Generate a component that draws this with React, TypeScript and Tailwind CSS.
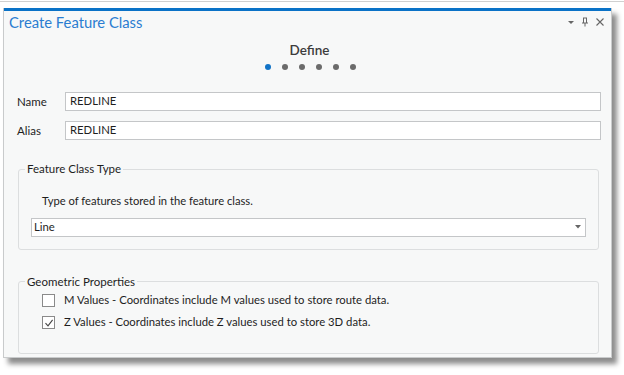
import { useState } from "react";

const font = { fontFamily: 'Lato, "Noto Sans", sans-serif' };

function GroupBox({ title, children, className }: { title: string; children: React.ReactNode; className?: string }) {
  return (
    <fieldset className={`rounded-[3px] border border-[#dcdedf] px-[12px] ${className ?? ""}`}>
      <legend className="-ml-[6px] px-[2px] text-[11.5px] leading-[14px] text-[#1e1e1e]">{title}</legend>
      {children}
    </fieldset>
  );
}

function CheckRow({ checked, label }: { checked: boolean; label: string }) {
  return (
    <div className="flex h-[16px] items-center gap-[9px]">
      <span className="flex h-[13px] w-[13px] items-center justify-center border border-[#8a8a8a] bg-white">
        {checked ? (
          <svg width="10" height="10" viewBox="0 0 10 10">
            <path d="M1.5 5.2 L4 7.8 L8.6 1.8" fill="none" stroke="#444" strokeWidth="1.1" />
          </svg>
        ) : null}
      </span>
      <span className="text-[11.3px] text-[#1e1e1e]">{label}</span>
    </div>
  );
}

export default function App() {
  const [name] = useState("REDLINE");

  return (
    <main className="min-h-screen bg-white pt-[1px]" style={font}>
      <div className="h-[1px] bg-[#d0d0d0]" />
      <section className="ml-[3px] mt-[6px] w-[609px] border-x border-b border-[#c9cbcc] bg-[#f7f8f8] shadow-[5px_6px_5px_rgba(0,0,0,0.45)]">
        <div className="h-[3px] bg-[#0a72c7]" />

        <header className="flex items-center justify-between pl-[5px] pr-[6px] pt-[1px]">
          <h1 className="text-[14.8px] leading-[20px] text-[#2a7dd1]">Create Feature Class</h1>
          <div className="flex items-center gap-[6px] text-[#555]">
            <svg width="8" height="8" viewBox="0 0 8 8">
              <path d="M1 3 L7 3 L4 6 Z" fill="#666" />
            </svg>
            <svg width="8" height="10" viewBox="0 0 8 10">
              <path d="M2 1 H6 M2.5 1 V6 M5.5 1 V6 M1 6 H7 M4 6 V9.5" fill="none" stroke="#666" strokeWidth="1" />
            </svg>
            <svg width="10" height="10" viewBox="0 0 10 10">
              <path d="M1.5 1.5 L8.5 8.5 M8.5 1.5 L1.5 8.5" fill="none" stroke="#666" strokeWidth="1.1" />
            </svg>
          </div>
        </header>

        <div className="mt-[10px] flex flex-col items-center pl-[4px]">
          <p className="text-[13.5px] font-semibold leading-[16px] text-[#3c3c3c]">Define</p>
          <div className="mt-[6px] flex gap-[11px] pl-[2px]">
            <span className="h-[6px] w-[6px] rounded-full bg-[#1273c7]" />
            <span className="h-[6px] w-[6px] rounded-full bg-[#6b6b6b]" />
            <span className="h-[6px] w-[6px] rounded-full bg-[#6b6b6b]" />
            <span className="h-[6px] w-[6px] rounded-full bg-[#6b6b6b]" />
            <span className="h-[6px] w-[6px] rounded-full bg-[#6b6b6b]" />
            <span className="h-[6px] w-[6px] rounded-full bg-[#6b6b6b]" />
          </div>
        </div>

        <div className="mt-[22px] grid grid-cols-[48px_1fr] items-center gap-y-[10px] pl-[13px] pr-[10px]">
          <label className="text-[11.5px] text-[#1e1e1e]">Name</label>
          <div className="flex h-[19px] items-center border border-[#c4c6c8] bg-white px-[4px] text-[11.3px] text-[#1e1e1e]">
            {name}
          </div>
          <label className="text-[11.5px] text-[#1e1e1e]">Alias</label>
          <div className="flex h-[19px] items-center border border-[#c4c6c8] bg-white px-[4px] text-[11.3px] text-[#1e1e1e]">
            REDLINE
          </div>
        </div>

        <div className="mt-[22px] flex flex-col gap-[25px] pl-[14px] pr-[12px] pb-[3px]">
          <GroupBox title="Feature Class Type" className="pb-[12px]">
            <p className="mt-[17px] pl-[11px] text-[11.2px] text-[#1e1e1e]">Type of features stored in the feature class.</p>
            <div className="mt-[8px] flex h-[19px] items-center justify-between border border-[#c4c6c8] bg-white pl-[2px] pr-[4px] text-[11.3px] text-[#1e1e1e]">
              <span>Line</span>
              <svg width="6" height="4" viewBox="0 0 6 4">
                <path d="M0 0 H6 L3 3.5 Z" fill="#666" />
              </svg>
            </div>
          </GroupBox>

          <GroupBox title="Geometric Properties" className="pb-[22px]">
            <div className="mt-[4px] flex flex-col gap-[6px] pl-[11px]">
              <CheckRow checked={false} label="M Values - Coordinates include M values used to store route data." />
              <CheckRow checked label="Z Values - Coordinates include Z values used to store 3D data." />
            </div>
          </GroupBox>
        </div>
      </section>
    </main>
  );
}
